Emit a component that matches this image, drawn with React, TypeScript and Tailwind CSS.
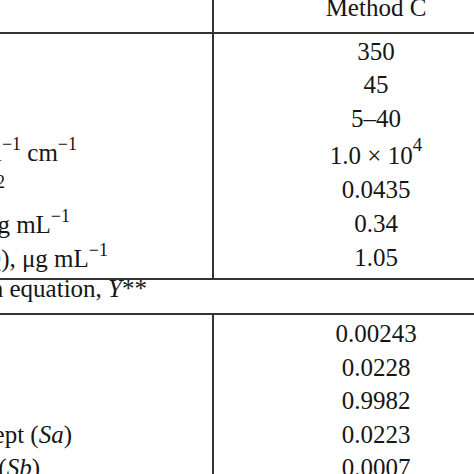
import React from 'react';

const Sup = ({ children, big }: { children: React.ReactNode; big?: boolean }) => (
  <span className={big ? 'text-[19px] leading-none align-[13px]' : 'text-[18px] leading-none align-[11px]'}>
    {children}
  </span>
);

interface RowProps {
  label: React.ReactNode;
  value: React.ReactNode;
  pr: string;
  extra?: string;
}

function Row({ label, value, pr, extra = '' }: RowProps) {
  return (
    <div className="flex w-[538px] leading-[33.4px]">
      <div
        className={`w-[214px] shrink-0 flex justify-end overflow-hidden whitespace-nowrap border-r-2 border-[#333] ${pr} ${extra}`}
      >
        <span className="shrink-0">{label}</span>
      </div>
      <div className={`w-[324px] shrink-0 text-center whitespace-nowrap ${extra}`}>{value}</div>
    </div>
  );
}

export default function App() {
  return (
    <div className="w-[474px] h-[474px] overflow-hidden bg-white text-[#161616] text-[25px] font-['Liberation_Serif',serif]">
      {/* header */}
      <div className="flex w-[538px] h-[34px] border-b-2 border-[#333] leading-[16px]">
        <div className="w-[214px] shrink-0 border-r-2 border-[#333]" />
        <div className="w-[324px] shrink-0 text-center">Method C</div>
      </div>

      <Row label="λmax, nm" value="350" pr="pr-[212px]" extra="pt-[1px]" />
      <Row label="Reaction time, min" value="45" pr="pr-[212px]" />
      <Row label="Beer's law limits, μg mL−1" value="5–40" pr="pr-[212px]" />
      <Row
        label={
          <>
            Molar absorptivity, L mol<Sup>−1</Sup> cm<Sup>−1</Sup>
          </>
        }
        value={
          <>
            1.0 × 10<Sup big>4</Sup>
          </>
        }
        pr="pr-[135px]"
      />
      <Row
        label={
          <>
            Sandell sensitivity, μg cm<Sup>−2</Sup>
          </>
        }
        value="0.0435"
        pr="pr-[207px]"
      />
      <Row
        label={
          <>
            Limit of detection (LOD), μg mL<Sup>−1</Sup>
          </>
        }
        value="0.34"
        pr="pr-[142px]"
      />
      <Row
        label={
          <>
            Limit of quantification (LOQ), μg mL<Sup>−1</Sup>
          </>
        }
        value="1.05"
        pr="pr-[104px]"
        extra="pb-[2px]"
      />

      {/* section row spanning both columns */}
      <div className="w-[538px] h-[37.5px] border-y-2 border-[#333] leading-[17px]">
        <div className="w-[214px] h-full flex items-start justify-end overflow-hidden whitespace-nowrap pr-[67px]">
          <span className="shrink-0">
            Regression equation, <i>Y</i>**
          </span>
        </div>
      </div>

      <Row label={<>Slope (<i>b</i>)</>} value="0.00243" pr="pr-[212px]" extra="pt-[2px]" />
      <Row label={<>Intercept (<i>a</i>)</>} value="0.0228" pr="pr-[212px]" />
      <Row label={<>Correlation coefficient (<i>r</i>)</>} value="0.9982" pr="pr-[212px]" />
      <Row
        label={
          <>
            Standard deviation of intercept (<i>Sa</i>)
          </>
        }
        value="0.0223"
        pr="pr-[140px]"
      />
      <Row
        label={
          <>
            Standard deviation of slope (<i>Sb</i>)
          </>
        }
        value="0.0007"
        pr="pr-[172px]"
      />
    </div>
  );
}
